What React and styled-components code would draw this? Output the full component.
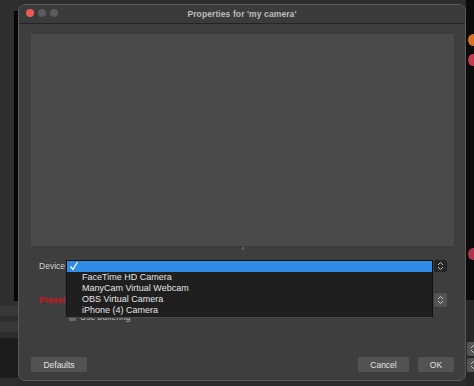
import React from 'react'
import styled, { createGlobalStyle } from 'styled-components'

const GlobalStyle = createGlobalStyle`
  html, body {
    margin: 0;
    padding: 0;
    background: #2c2c2c;
    font-family: "Liberation Sans", Arial, sans-serif;
  }
`

const devices = [
  'FaceTime HD Camera',
  'ManyCam Virtual Webcam',
  'OBS Virtual Camera',
  'iPhone (4) Camera',
]

function Stepper({ dark }) {
  return (
    <StepBox dark={dark}>
      <svg width="7" height="10" viewBox="0 0 7 10">
        <path d="M1 4 L3.5 1.5 L6 4 M1 6 L3.5 8.5 L6 6" fill="none" stroke="#c8c8c8" strokeWidth="1" />
      </svg>
    </StepBox>
  )
}

function App() {
  return (
    <>
      <GlobalStyle />
      <Screen>
        <LeftGutter>
          <BlackStripe />
          <Stripes>
            <span />
            <span />
            <span />
          </Stripes>
        </LeftGutter>

        <Window>
          <TitleBar>
            <Lights>
              <Light color="#ec5a55" />
              <Light color="#5b5b5b" />
              <Light color="#5b5b5b" />
            </Lights>
            <Title>Properties for 'my camera'</Title>
          </TitleBar>

          <Body>
            <Preview />
            <Handle />

            <Form>
              <Row>
                <Label>Device</Label>
                <SelectWrap>
                  <Selected>
                    <svg width="10" height="10" viewBox="0 0 10 10">
                      <path d="M1.5 5.5 L4 8.5 L8.5 1" fill="none" stroke="#fff" strokeWidth="1.3" />
                    </svg>
                  </Selected>
                  <Popup>
                    {devices.map((d) => (
                      <Item key={d}>{d}</Item>
                    ))}
                  </Popup>
                </SelectWrap>
                <Stepper dark />
              </Row>

              <Row gap={21}>
                <Label red>Preset</Label>
                <GreySelect />
                <Stepper />
              </Row>

              <CheckRow>
                <Box />
                <span>Use buffering</span>
              </CheckRow>
            </Form>

            <Footer>
              <Button w={56}>Defaults</Button>
              <Spacer />
              <Button w={51}>Cancel</Button>
              <Button w={36}>OK</Button>
            </Footer>
          </Body>
        </Window>

        <RightGutter>
          <Blob color="#e0701f" top={34} />
          <Blob color="#c83a4e" top={54} />
          <Blob color="#b3304a" top={248} />
          <BottomGlyphs>
            <Stepper />
            <Stepper />
          </BottomGlyphs>
        </RightGutter>
      </Screen>
    </>
  )
}

export default App

const Screen = styled.div`
  display: flex;
  width: 474px;
  height: 386px;
  overflow: hidden;
  background: #2c2c2c;
`

const LeftGutter = styled.div`
  position: relative;
  width: 18px;
  flex-shrink: 0;
  background: #2e2e2e;
`

const BlackStripe = styled.div`
  position: absolute;
  left: 14px;
  top: 11px;
  width: 4px;
  height: 290px;
  background: #050505;
`

const Stripes = styled.div`
  position: absolute;
  left: 0;
  top: 306px;
  width: 18px;
  display: flex;
  flex-direction: column;
  gap: 6px;

  span {
    display: block;
    height: 10px;
    background: #383838;
  }
  span:last-child {
    background: #1c1c1c;
    height: 40px;
  }
`

const Window = styled.div`
  position: relative;
  z-index: 1;
  margin-top: 4px;
  width: 448px;
  height: 377px;
  flex-shrink: 0;
  display: flex;
  flex-direction: column;
  background: #3e3e3e;
  border: 1px solid #5a5a5a;
  border-radius: 7px;
  box-sizing: border-box;
  overflow: hidden;
`

const TitleBar = styled.div`
  position: relative;
  height: 18px;
  display: flex;
  align-items: center;
  justify-content: center;
  background: #3b3b3b;
  border-bottom: 1px solid #232323;
  flex-shrink: 0;
`

const Lights = styled.div`
  position: absolute;
  left: 7px;
  top: 4px;
  display: flex;
  gap: 4px;
`

const Light = styled.span`
  width: 8px;
  height: 8px;
  border-radius: 50%;
  background: ${(p) => p.color};
`

const Title = styled.div`
  color: #bdbdbd;
  font-size: 8.5px;
  font-weight: bold;
  letter-spacing: 0.1px;
`

const Body = styled.div`
  flex: 1;
  display: flex;
  flex-direction: column;
  padding: 10px 11px 8px 12px;
`

const Preview = styled.div`
  height: 212px;
  background: #4a4a4a;
`

const Handle = styled.div`
  align-self: center;
  width: 2px;
  height: 3px;
  margin-top: 1px;
  background: #5e5e5e;
`

const Form = styled.div`
  display: flex;
  flex-direction: column;
  margin-top: 9px;
`

const Row = styled.div`
  display: flex;
  align-items: center;
  height: 13px;
  margin-top: ${(p) => (p.gap ? p.gap + 'px' : '0')};
`

const Label = styled.div`
  width: 34px;
  padding-right: 1px;
  text-align: right;
  font-size: 8.5px;
  color: ${(p) => (p.red ? '#d5121c' : '#d0d0d0')};
  font-weight: ${(p) => (p.red ? 'bold' : 'normal')};
`

const SelectWrap = styled.div`
  position: relative;
  z-index: 2;
  width: 367px;
  height: 12px;
`

const Selected = styled.div`
  height: 12px;
  display: flex;
  align-items: center;
  padding-left: 2px;
  background: #2f8be3;
  border: 1px solid #121212;
  border-bottom: none;
  box-sizing: border-box;
`

const Popup = styled.div`
  position: absolute;
  left: 0;
  top: 12px;
  width: 100%;
  height: 46px;
  box-sizing: border-box;
  padding: 0 0 0 15px;
  background: #1f1f1f;
  border: 1px solid #121212;
  border-top: none;
  border-bottom-color: #4a4a4a;
  display: flex;
  flex-direction: column;
  justify-content: center;
`

const Item = styled.div`
  height: 11.2px;
  line-height: 11.2px;
  font-size: 9px;
  color: #e4e4e4;
`

const GreySelect = styled.div`
  width: 367px;
  height: 13px;
`

const StepBox = styled.div`
  width: 13px;
  height: ${(p) => (p.dark ? '12px' : '14px')};
  margin-left: 1px;
  display: flex;
  align-items: center;
  justify-content: center;
  background: ${(p) => (p.dark ? '#262626' : '#545454')};
  border-radius: 2px;
`

const CheckRow = styled.div`
  display: flex;
  align-items: center;
  gap: 4px;
  margin-top: 6px;
  margin-left: 38px;
  font-size: 8.5px;
  color: #bdbdbd;
`

const Box = styled.span`
  width: 7px;
  height: 7px;
  background: #6a6a6a;
  border-radius: 1px;
`

const Footer = styled.div`
  display: flex;
  align-items: center;
  gap: 9px;
  margin-top: auto;
`

const Spacer = styled.div`
  flex: 1;
`

const Button = styled.div`
  width: ${(p) => p.w}px;
  height: 15px;
  display: flex;
  align-items: center;
  justify-content: center;
  background: #535353;
  border-radius: 2px;
  font-size: 8.5px;
  color: #e2e2e2;
`

const RightGutter = styled.div`
  position: relative;
  flex: 1;
  background: #0b0b0b;
`

const Blob = styled.span`
  position: absolute;
  left: 2px;
  top: ${(p) => p.top}px;
  width: 10px;
  height: 12px;
  border-radius: 50%;
  background: ${(p) => p.color};
`

const BottomGlyphs = styled.div`
  position: absolute;
  left: 0;
  right: 0;
  top: 300px;
  bottom: 0;
  padding-top: 42px;
  background: #262626;
  display: flex;
  flex-direction: column;
  gap: 2px;
`
